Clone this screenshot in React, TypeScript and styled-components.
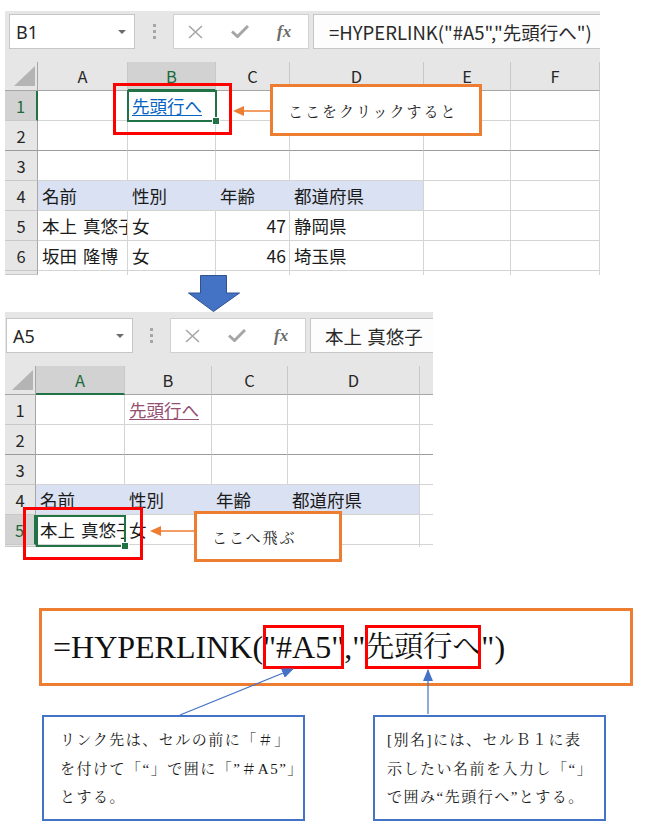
import { Fragment, ReactNode } from "react";
import styled, { createGlobalStyle } from "styled-components";

const GlobalStyle = createGlobalStyle`
  html, body {
    margin: 0;
    padding: 0;
    background: #fff;
  }
  body {
    width: 654px;
    height: 830px;
    overflow: hidden;
    font-family: "Noto Sans CJK JP", "Noto Sans", sans-serif;
  }
`;

const SERIF = `"Liberation Serif", "Noto Serif CJK JP", "Noto Sans CJK JP", serif`;
const GRID = "#d4d4d4";
const FILL = "#d9e1f2";
const GREEN = "#217346";
const ORANGE = "#ed7d31";
const BLUE = "#4472c4";

type Cell = { text?: string; link?: "fresh" | "visited"; right?: boolean; fill?: boolean };

type SheetSpec = {
  rowHead: number;
  cols: number[];
  letters: string[];
  activeCol: number;
  activeRow: number;
  rows: Cell[][];
  tail: number;
  openRight: boolean;
  toolbar: { height: number; top: number; left: number; nameW: number; gripW: number; padText: number };
  name: string;
  formula: string;
};

const Page = styled.div`
  display: flex;
  flex-direction: column;
  width: 654px;
  padding-top: 11px;
`;

const SheetFrame = styled.div<{ $w: number }>`
  position: relative;
  width: ${(p) => p.$w}px;
  margin-left: 5px;
`;

const Toolbar = styled.div<{ $h: number; $top: number; $left: number }>`
  display: flex;
  align-items: flex-start;
  height: ${(p) => p.$h}px;
  padding: ${(p) => p.$top}px 0 0 ${(p) => p.$left}px;
  box-sizing: border-box;
  background: #e6e6e6;
`;

const NameBox = styled.div<{ $w: number }>`
  display: flex;
  align-items: center;
  justify-content: space-between;
  width: ${(p) => p.$w}px;
  height: 35px;
  box-sizing: border-box;
  padding: 0 8px 0 6px;
  background: #fff;
  border: 1px solid #c6c6c6;
  font: 18px "Noto Sans", "Open Sans", sans-serif;
  color: #262626;
`;

const Caret = styled.span`
  width: 0;
  height: 0;
  border-left: 4px solid transparent;
  border-right: 4px solid transparent;
  border-top: 4px solid #6b6b6b;
`;

const Grip = styled.div<{ $w: number }>`
  display: flex;
  flex-direction: column;
  align-items: center;
  justify-content: center;
  gap: 3px;
  width: ${(p) => p.$w}px;
  height: 35px;

  span {
    width: 3px;
    height: 3px;
    background: #a6a6a6;
  }
`;

const FxButtons = styled.div`
  display: flex;
  align-items: center;
  gap: 28px;
  width: 136px;
  height: 35px;
  padding-left: 14px;
  box-sizing: border-box;
  background: #fff;
  border: 1px solid #d0d0d0;
`;

const FxLabel = styled.span`
  font: italic bold 17px "Liberation Serif", serif;
  color: #6b6b6b;
`;

const FormulaInput = styled.div<{ $pad: number }>`
  flex: 1;
  display: flex;
  align-items: center;
  height: 35px;
  margin-left: 4px;
  padding-left: ${(p) => p.$pad}px;
  box-sizing: border-box;
  background: #fdfdfd;
  border: 1px solid #c6c6c6;
  border-right: none;
  font-size: 18.5px;
  word-spacing: 1px;
  color: #2a2a2a;
  white-space: nowrap;
  overflow: hidden;
`;

const Grid = styled.div<{ $cols: string; $rows: string }>`
  display: grid;
  grid-template-columns: ${(p) => p.$cols};
  grid-template-rows: ${(p) => p.$rows};
  font-size: 17.5px;
  word-spacing: 2px;
  color: #1a1a1a;
`;

const Corner = styled.div`
  display: flex;
  align-items: flex-end;
  justify-content: flex-end;
  padding: 0 2px 4px 0;
  background: #e6e6e6;
  border-right: 1px solid #a6a6a6;
  border-bottom: 1px solid #a6a6a6;
`;

const CornerMark = styled.span`
  width: 21px;
  height: 20px;
  background: #b4b4b4;
  clip-path: polygon(100% 0, 100% 100%, 0 100%);
`;

const ColHead = styled.div<{ $active?: boolean; $open?: boolean }>`
  display: flex;
  align-items: center;
  justify-content: center;
  background: ${(p) => (p.$active ? "#d2d2d2" : "#e6e6e6")};
  color: ${(p) => (p.$active ? "#1d6a3d" : "#262626")};
  border-right: ${(p) => (p.$open ? "none" : "1px solid #c8c8c8")};
  border-bottom: ${(p) => (p.$active ? `2px solid ${GREEN}` : "1px solid #a6a6a6")};
  font-size: 16.5px;
`;

const RowHead = styled.div<{ $active?: boolean; $freeze?: boolean }>`
  display: flex;
  align-items: center;
  justify-content: center;
  background: ${(p) => (p.$active ? "#d2d2d2" : "#e6e6e6")};
  color: ${(p) => (p.$active ? "#1d6a3d" : "#262626")};
  border-right: ${(p) => (p.$active ? `2px solid ${GREEN}` : "1px solid #a6a6a6")};
  border-bottom: 1px solid ${(p) => (p.$freeze ? "#9b9b9b" : "#c8c8c8")};
  font-size: 16.5px;
`;

const DataCell = styled.div<{
  $fill?: boolean;
  $joinRight?: boolean;
  $right?: boolean;
  $freeze?: boolean;
  $open?: boolean;
  $tail?: boolean;
}>`
  display: flex;
  align-items: center;
  justify-content: ${(p) => (p.$right ? "flex-end" : "flex-start")};
  min-width: 0;
  padding: 0 3px 0 4px;
  overflow: hidden;
  white-space: nowrap;
  background: ${(p) => (p.$fill ? FILL : "#fff")};
  border-right: ${(p) => (p.$open ? "none" : `1px solid ${p.$joinRight ? FILL : GRID}`)};
  border-bottom: ${(p) => (p.$tail ? "none" : `1px solid ${p.$freeze ? "#9b9b9b" : GRID}`)};
`;

const Link = styled.span<{ $visited?: boolean }>`
  color: ${(p) => (p.$visited ? "#954f72" : "#0563c1")};
  text-decoration: underline;
  text-underline-offset: 2px;
`;

const Selection = styled.div<{ $x: number; $y: number; $w: number; $h: number }>`
  position: absolute;
  left: ${(p) => p.$x}px;
  top: ${(p) => p.$y}px;
  width: ${(p) => p.$w}px;
  height: ${(p) => p.$h}px;
  box-sizing: border-box;
  border: 2px solid ${GREEN};

  &::after {
    content: "";
    position: absolute;
    right: -5px;
    bottom: -5px;
    width: 6px;
    height: 6px;
    background: ${GREEN};
    border: 1px solid #fff;
  }
`;

const RedFrame = styled.div<{ $x: number; $y: number; $w: number; $h: number }>`
  position: absolute;
  left: ${(p) => p.$x}px;
  top: ${(p) => p.$y}px;
  width: ${(p) => p.$w}px;
  height: ${(p) => p.$h}px;
  box-sizing: border-box;
  border: 3px solid #ff0000;
`;

const Callout = styled.div<{ $x: number; $y: number; $w: number; $h: number }>`
  position: absolute;
  left: ${(p) => p.$x}px;
  top: ${(p) => p.$y}px;
  width: ${(p) => p.$w}px;
  height: ${(p) => p.$h}px;
  box-sizing: border-box;
  display: flex;
  align-items: center;
  padding-left: 15px;
  background: #fff;
  border: 3px solid ${ORANGE};
  font: 15px ${SERIF};
  letter-spacing: 2px;
  color: #222;
`;

const ArrowSvg = styled.svg<{ $x: number; $y: number }>`
  position: absolute;
  left: ${(p) => p.$x}px;
  top: ${(p) => p.$y}px;
  overflow: visible;
`;

const DownArrow = styled.svg`
  display: block;
  margin-left: 187px;
`;

const Notes = styled.div`
  position: relative;
  margin-top: 61px;
`;

const FormulaBanner = styled.div`
  display: flex;
  align-items: center;
  width: 594px;
  height: 78px;
  margin-left: 39px;
  padding-left: 11px;
  box-sizing: border-box;
  border: 3px solid ${ORANGE};
  font: 32px ${SERIF};
  color: #111;
  white-space: nowrap;
`;

const Boxed = styled.span<{ $size?: number }>`
  display: inline-block;
  line-height: 44px;
  font-size: ${(p) => p.$size ?? 32}px;
  outline: 3px solid #ff0000;
  outline-offset: -3px;
`;

const NoteRow = styled.div`
  display: flex;
  gap: 68px;
  margin: 29px 0 0 42px;
`;

const NoteBox = styled.div<{ $w: number; $pad: number }>`
  width: ${(p) => p.$w}px;
  height: 106px;
  box-sizing: border-box;
  padding: 9px 0 0 ${(p) => p.$pad}px;
  border: 2px solid ${BLUE};
  font: 15px ${SERIF};
  letter-spacing: 1.5px;
  line-height: 28.5px;
  color: #1a1a1a;
  white-space: nowrap;
`;

const NoteArrows = styled.svg`
  position: absolute;
  left: 0;
  top: 0;
  pointer-events: none;
`;

function CancelIcon() {
  return (
    <svg width="15" height="14" viewBox="0 0 15 14">
      <path d="M1 1 L14 13 M14 1 L1 13" stroke="#a6a6a6" strokeWidth="1.6" fill="none" />
    </svg>
  );
}

function EnterIcon() {
  return (
    <svg width="18" height="13" viewBox="0 0 18 13">
      <path d="M1 6.5 L6.5 11.5 L17 1" stroke="#a6a6a6" strokeWidth="3" fill="none" />
    </svg>
  );
}

function OrangeArrow({ x, y, len }: { x: number; y: number; len: number }) {
  return (
    <ArrowSvg $x={x} $y={y - 6} width={len} height={12} viewBox={`0 0 ${len} 12`}>
      <line x1={9} y1={6} x2={len} y2={6} stroke={ORANGE} strokeWidth={1.5} />
      <polygon points="0,6 11,1 11,11" fill={ORANGE} />
    </ArrowSvg>
  );
}

function Sheet({ spec, children }: { spec: SheetSpec; children?: ReactNode }) {
  const widths = [spec.rowHead, ...spec.cols];
  const total = widths.reduce((a, b) => a + b, 0);
  const cols = widths.map((w) => `${w}px`).join(" ");
  const rows = `29px repeat(${spec.rows.length}, 30px)${spec.tail ? ` ${spec.tail}px` : ""}`;
  const last = spec.cols.length - 1;
  const tb = spec.toolbar;

  return (
    <SheetFrame $w={total}>
      <Toolbar $h={tb.height} $top={tb.top} $left={tb.left}>
        <NameBox $w={tb.nameW}>
          {spec.name}
          <Caret />
        </NameBox>
        <Grip $w={tb.gripW}>
          <span />
          <span />
          <span />
        </Grip>
        <FxButtons>
          <CancelIcon />
          <EnterIcon />
          <FxLabel>fx</FxLabel>
        </FxButtons>
        <FormulaInput $pad={tb.padText}>{spec.formula}</FormulaInput>
      </Toolbar>
      <Grid $cols={cols} $rows={rows}>
        <Corner>
          <CornerMark />
        </Corner>
        {spec.letters.map((l, i) => (
          <ColHead key={`h${i}`} $active={i === spec.activeCol} $open={spec.openRight && i === last}>
            {l}
          </ColHead>
        ))}
        {spec.rows.map((row, r) => (
          <Fragment key={`r${r}`}>
            <RowHead $active={r + 1 === spec.activeRow} $freeze={r === 1}>
              {r + 1}
            </RowHead>
            {spec.cols.map((_, c) => {
              const cell = row[c] ?? {};
              return (
                <DataCell
                  key={`c${c}`}
                  $fill={cell.fill}
                  $joinRight={cell.fill && row[c + 1]?.fill}
                  $right={cell.right}
                  $freeze={r === 1}
                  $open={spec.openRight && c === last}
                >
                  {cell.link ? <Link $visited={cell.link === "visited"}>{cell.text}</Link> : cell.text}
                </DataCell>
              );
            })}
          </Fragment>
        ))}
        {spec.tail > 0 && (
          <>
            <RowHead />
            {spec.cols.map((_, c) => (
              <DataCell key={`t${c}`} $tail $open={spec.openRight && c === last} />
            ))}
          </>
        )}
      </Grid>
      {children}
    </SheetFrame>
  );
}

const heading: Cell[] = [
  { text: "名前", fill: true },
  { text: "性別", fill: true },
  { text: "年齢", fill: true },
  { text: "都道府県", fill: true },
];

const before: SheetSpec = {
  rowHead: 33,
  cols: [90, 88, 74, 134, 87, 89],
  letters: ["A", "B", "C", "D", "E", "F"],
  activeCol: 1,
  activeRow: 1,
  rows: [
    [{}, { text: "先頭行へ", link: "fresh" }],
    [],
    [],
    heading,
    [{ text: "本上 真悠子" }, { text: "女" }, { text: "47", right: true }, { text: "静岡県" }],
    [{ text: "坂田 隆博" }, { text: "女" }, { text: "46", right: true }, { text: "埼玉県" }],
  ],
  tail: 4,
  openRight: false,
  toolbar: { height: 51, top: 3, left: 4, nameW: 126, gripW: 38, padText: 15 },
  name: "B1",
  formula: '=HYPERLINK("#A5","先頭行へ")',
};

// row 5 beyond column B sits under the callout, so only A and B are shown
const after: SheetSpec = {
  rowHead: 31,
  cols: [89, 87, 76, 132, 13],
  letters: ["A", "B", "C", "D", ""],
  activeCol: 0,
  activeRow: 5,
  rows: [
    [{}, { text: "先頭行へ", link: "visited" }],
    [],
    [],
    heading,
    [{ text: "本上 真悠子" }, { text: "女" }],
  ],
  tail: 2,
  openRight: true,
  toolbar: { height: 54, top: 6, left: 1, nameW: 127, gripW: 37, padText: 14 },
  name: "A5",
  formula: "本上 真悠子",
};

export default function App() {
  return (
    <>
      <GlobalStyle />
      <Page>
        <Sheet spec={before}>
          <Selection $x={122} $y={79} $w={90} $h={32} />
          <RedFrame $x={108} $y={72} $w={119} $h={52} />
          <OrangeArrow x={228} y={100} len={38} />
          <Callout $x={265} $y={73} $w={212} $h={52}>
            ここをクリックすると
          </Callout>
        </Sheet>

        <DownArrow width="54" height="37" viewBox="0 0 54 37">
          <polygon
            points="13.5,0.5 39.5,0.5 39.5,18 52.5,18 26.5,36.5 1.5,18 13.5,18"
            fill={BLUE}
            stroke="#2f528f"
            strokeWidth="1"
          />
        </DownArrow>

        <Sheet spec={after}>
          <Selection $x={31} $y={203} $w={90} $h={32} />
          <RedFrame $x={18} $y={195} $w={120} $h={53} />
          <OrangeArrow x={145} y={219} len={46} />
          <Callout $x={189} $y={199} $w={148} $h={51}>
            ここへ飛ぶ
          </Callout>
        </Sheet>

        <Notes>
          <FormulaBanner>
            =HYPERLINK(<Boxed>"#A5"</Boxed>,"<Boxed $size={29}>先頭行へ</Boxed>")
          </FormulaBanner>
          <NoteRow>
            <NoteBox $w={263} $pad={16}>
              リンク先は、セルの前に「＃」
              <br />
              を付けて「“」で囲に「”＃A5”」
              <br />
              とする。
            </NoteBox>
            <NoteBox $w={233} $pad={12}>
              [別名]には、セルＢ１に表
              <br />
              示したい名前を入力し「“」
              <br />
              で囲み“先頭行へ”とする。
            </NoteBox>
          </NoteRow>
          <NoteArrows width="654" height="215" viewBox="0 0 654 215">
            <defs>
              <marker id="tip" markerUnits="userSpaceOnUse" markerWidth="12" markerHeight="10" refX="11" refY="5" orient="auto">
                <polygon points="0,0 12,5 0,10" fill={BLUE} />
              </marker>
            </defs>
            <line x1="180" y1="107" x2="293" y2="61" stroke={BLUE} strokeWidth="1.2" markerEnd="url(#tip)" />
            <line x1="428" y1="106" x2="428" y2="62" stroke={BLUE} strokeWidth="1.2" markerEnd="url(#tip)" />
          </NoteArrows>
        </Notes>
      </Page>
    </>
  );
}
